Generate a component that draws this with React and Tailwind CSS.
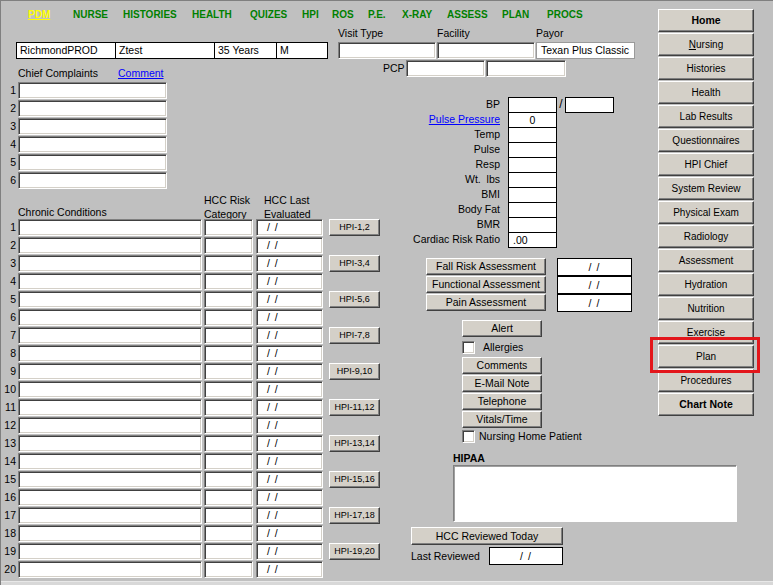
import React from 'react';

const SUNKEN =
  'bg-white border border-t-[#808080] border-l-[#808080] border-b-white border-r-white shadow-[inset_1px_1px_0_#404040,inset_-1px_-1px_0_#d4d0c8]';
const RAISED =
  'bg-[#d4d0c8] border border-t-white border-l-white border-b-[#404040] border-r-[#404040] shadow-[inset_-1px_-1px_0_#808080]';

const NAV = [
  ['PDM', 'w-[45px]'],
  ['NURSE', 'w-[50px]'],
  ['HISTORIES', 'w-[69px]'],
  ['HEALTH', 'w-[58px]'],
  ['QUIZES', 'w-[52px]'],
  ['HPI', 'w-[30px]'],
  ['ROS', 'w-[36px]'],
  ['P.E.', 'w-[34px]'],
  ['X-RAY', 'w-[45px]'],
  ['ASSESS', 'w-[55px]'],
  ['PLAN', 'w-[45px]'],
  ['PROCS', ''],
];

const VITALS = ['BP', 'Pulse Pressure', 'Temp', 'Pulse', 'Resp', 'Wt.  lbs', 'BMI', 'Body Fat', 'BMR', 'Cardiac Risk Ratio'];

const SIDE = [
  'Home', 'Nursing', 'Histories', 'Health', 'Lab Results', 'Questionnaires', 'HPI Chief',
  'System Review', 'Physical Exam', 'Radiology', 'Assessment', 'Hydration', 'Nutrition',
  'Exercise', 'Plan', 'Procedures', 'Chart Note',
];

function Btn({ children, className = '' }) {
  return (
    <div className={`${RAISED} flex items-center justify-center whitespace-nowrap ${className}`}>
      {children}
    </div>
  );
}

function Check() {
  return <div className={`${SUNKEN} w-[13px] h-[13px] shrink-0`} />;
}

function Num({ n }) {
  return <div className="w-[17px] pr-[2px] text-right leading-[17px] shrink-0">{n}</div>;
}

export default function App() {
  const chronic = Array.from({ length: 20 }, (_, i) => i + 1);

  return (
    <div className="w-[773px] h-[585px] bg-[#c0c0c0] border-t border-l border-[#808080] overflow-hidden relative flex flex-col font-['Liberation_Sans',Arial,sans-serif] text-[10.5px] leading-[13px] text-black">
      <div className="flex h-[580px]">
        {/* main form */}
        <div className="w-[657px] flex flex-col shrink-0">
          <div className="h-[27px] flex items-center pl-[27px] text-[10px] font-bold">
            {NAV.map(([label, w], i) => (
              <div key={label} className={`${w} shrink-0`}>
                <span className={i === 0 ? 'text-[#ffff00] underline' : 'text-[#008000]'}>{label}</span>
              </div>
            ))}
          </div>

          <div className="h-[31px] flex items-end">
            <div className="ml-[15px] w-[312px] h-[17px] flex border border-black bg-white leading-[15px]">
              <div className="w-[99px] border-r border-black pl-[3px]">RichmondPROD</div>
              <div className="w-[99px] border-r border-black pl-[3px]">Ztest</div>
              <div className="w-[62px] border-r border-black pl-[3px]">35 Years</div>
              <div className="flex-1 pl-[3px]">M</div>
            </div>
            <div className="ml-[10px] flex gap-px">
              <div className="w-[98px] flex flex-col">
                <div className="mb-[2px]">Visit Type</div>
                <div className={`${SUNKEN} h-[17px]`} />
              </div>
              <div className="w-[98px] flex flex-col">
                <div className="mb-[2px]">Facility</div>
                <div className={`${SUNKEN} h-[17px]`} />
              </div>
              <div className="w-[99px] flex flex-col">
                <div className="mb-[2px]">Payor</div>
                <div className="h-[17px] bg-white border border-[#9a9a9a] pl-[4px] leading-[15px] overflow-hidden whitespace-nowrap">
                  Texan Plus Classic
                </div>
              </div>
            </div>
          </div>

          <div className="flex">
            {/* left column */}
            <div className="w-[382px] shrink-0 flex flex-col">
              <div className="h-[23px] flex items-end pb-[2px]">
                <div className="ml-[17px] w-[100px]">Chief Complaints</div>
                <div className="text-[#0000ff] underline">Comment</div>
              </div>
              {[1, 2, 3, 4, 5, 6].map((n) => (
                <div key={n} className="h-[18px] flex">
                  <Num n={n} />
                  <div className={`${SUNKEN} w-[149px] h-[17px]`} />
                </div>
              ))}
              <div className="h-[29px] flex">
                <div className="ml-[17px] w-[186px] self-end">Chronic Conditions</div>
                <div className="w-[60px] pt-[3px] leading-[14px]">
                  HCC Risk
                  <br />
                  Category
                </div>
                <div className="pt-[3px] leading-[14px]">
                  HCC Last
                  <br />
                  Evaluated
                </div>
              </div>
              {chronic.map((n) => (
                <div key={n} className="h-[18px] flex">
                  <Num n={n} />
                  <div className={`${SUNKEN} w-[184px] h-[17px]`} />
                  <div className={`${SUNKEN} ml-[2px] w-[49px] h-[17px]`} />
                  <div className={`${SUNKEN} ml-[3px] w-[67px] h-[17px] pl-[10px] leading-[15px] tracking-[1px]`}>/ /</div>
                  {n % 2 === 1 && (
                    <Btn className="ml-[6px] w-[51px] h-[17px] text-[9px]">
                      HPI-{n},{n + 1}
                    </Btn>
                  )}
                </div>
              ))}
            </div>

            {/* middle column */}
            <div className="w-[260px] shrink-0 flex flex-col">
              <div className="mt-px h-[17px] flex items-center">
                <div className="w-[23px]">PCP</div>
                <div className={`${SUNKEN} w-[79px] h-[17px]`} />
                <div className={`${SUNKEN} ml-px w-[80px] h-[17px]`} />
              </div>

              <div className="mt-[20px] flex flex-col">
                {VITALS.map((v, i) => (
                  <div key={v} className="h-[15px] flex leading-[15px]">
                    <div
                      className={`w-[117px] text-right whitespace-pre ${
                        i === 1 ? 'text-[#0000ff] underline' : ''
                      }`}
                    >
                      {v}
                    </div>
                    <div
                      className={`ml-[8px] w-[49px] h-[16px] border border-black bg-white leading-[14px] ${
                        i === 9 ? 'pl-[4px]' : 'text-center'
                      }`}
                    >
                      {i === 1 ? '0' : i === 9 ? '.00' : ''}
                    </div>
                    {i === 0 && (
                      <>
                        <div className="w-[8px] text-center text-[12px]">/</div>
                        <div className="w-[49px] h-[16px] border border-black bg-white" />
                      </>
                    )}
                  </div>
                ))}
              </div>

              <div className="mt-[11px] ml-[43px] flex">
                <div className="w-[120px] flex flex-col gap-px">
                  <Btn className="h-[17px]">Fall Risk Assessment</Btn>
                  <Btn className="h-[17px]">Functional Assessment</Btn>
                  <Btn className="h-[17px]">Pain Assessment</Btn>
                </div>
                <div className="ml-[11px] w-[75px] flex flex-col">
                  {[0, 1, 2].map((k) => (
                    <div key={k} className="h-[18px] border border-black bg-white text-center leading-[16px] tracking-[1px]">
                      / /
                    </div>
                  ))}
                </div>
              </div>

              <div className="mt-[8px] ml-[79px] flex flex-col w-[180px]">
                <Btn className="w-[80px] h-[17px]">Alert</Btn>
                <div className="h-[20px] flex items-center">
                  <Check />
                  <div className="ml-[8px]">Allergies</div>
                </div>
                <div className="w-[80px] flex flex-col gap-px">
                  <Btn className="h-[17px]">Comments</Btn>
                  <Btn className="h-[17px]">E-Mail Note</Btn>
                  <Btn className="h-[17px]">Telephone</Btn>
                  <Btn className="h-[17px]">Vitals/Time</Btn>
                </div>
                <div className="mt-[2px] h-[13px] flex items-center">
                  <Check />
                  <div className="ml-[4px] whitespace-nowrap">Nursing Home Patient</div>
                </div>
              </div>

              <div className="mt-[9px] ml-[70px] font-bold">HIPAA</div>
              <div className="ml-[70px] w-[284px] h-[57px] shrink-0 bg-white border border-t-[#808080] border-l-[#808080] border-b-white border-r-white shadow-[inset_1px_1px_0_#a0a0a0]" />

              <Btn className="mt-[5px] ml-[28px] w-[152px] h-[18px]">HCC Reviewed Today</Btn>
              <div className="mt-[2px] ml-[28px] h-[18px] flex items-center">
                <div className="w-[78px]">Last Reviewed</div>
                <div className="w-[74px] h-[18px] border border-black bg-white text-center leading-[16px] tracking-[1px]">
                  / /
                </div>
              </div>
            </div>
          </div>
        </div>

        {/* right navigation */}
        <div className="pt-[8px] w-[96px] flex flex-col gap-px text-[10px] self-start">
          {SIDE.map((s) => (
            <Btn
              key={s}
              className={`h-[23px] ${s === 'Home' || s === 'Chart Note' ? 'font-bold text-[10.5px]' : ''}`}
            >
              {s === 'Nursing' ? (
                <span>
                  <span className="underline">N</span>ursing
                </span>
              ) : (
                s
              )}
            </Btn>
          ))}
        </div>
      </div>
      <div className="flex-1 bg-[#d8d8d8] border-t border-[#e8e8e8]" />

      {/* highlight marker */}
      <div className="absolute left-[649px] top-[336px] w-[110px] h-[36px] border-[3px] border-[#e3161b]" />
    </div>
  );
}
